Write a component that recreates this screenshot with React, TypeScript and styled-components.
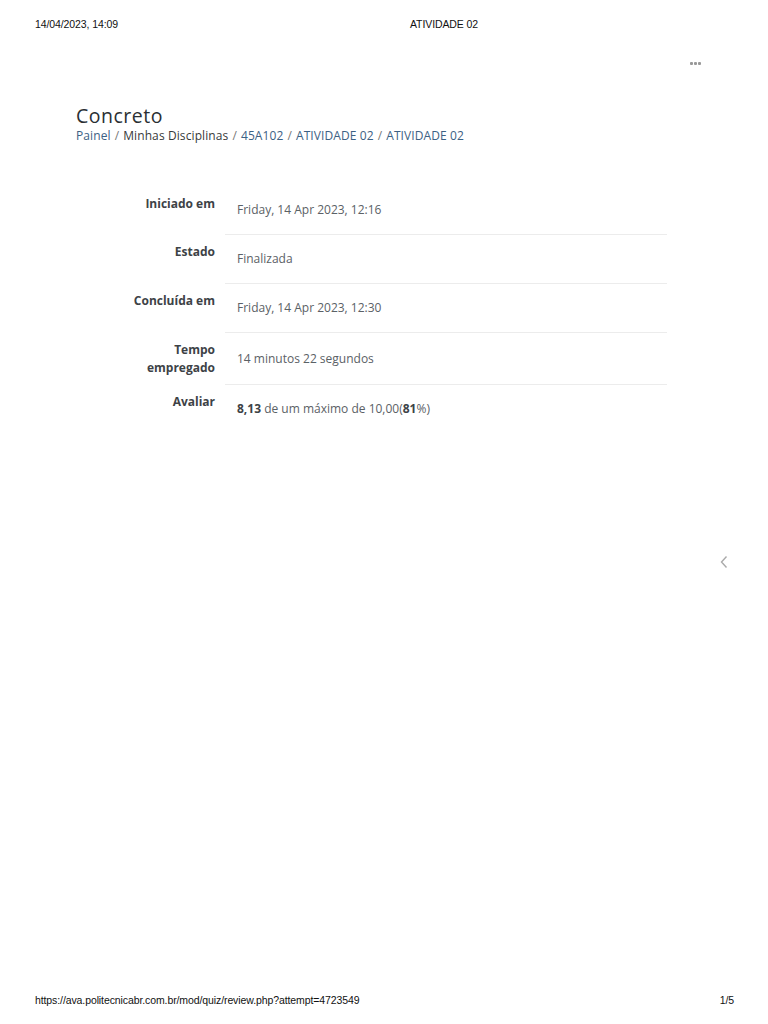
import React from 'react'
import styled, { createGlobalStyle } from 'styled-components'

const GlobalStyle = createGlobalStyle`
  html, body {
    margin: 0;
    padding: 0;
    background: #fff;
  }
  body {
    font-family: 'Open Sans', 'Noto Sans', sans-serif;
  }
`

const Sheet = styled.div`
  width: 768px;
  height: 1024px;
  display: flex;
  flex-direction: column;
  box-sizing: border-box;
  padding: 17px 34px 0 35px;
`

const PrintBar = styled.div`
  display: flex;
  align-items: center;
  height: 13px;
  font-family: 'Liberation Sans', Arial, sans-serif;
  font-size: 10.5px;
  color: #111;
  letter-spacing: -0.1px;
`

const PrintLeft = styled.span`
  width: 375px;
`

const PrintRight = styled.span`
  margin-left: auto;
`

const Main = styled.main`
  flex: 1;
  position: relative;
  padding: 0 0 0 41px;
`

const Dots = styled.div`
  position: absolute;
  top: 32px;
  right: 33px;
  display: flex;
  gap: 1px;
`

const Dot = styled.span`
  width: 3px;
  height: 3px;
  background: #999;
  border-radius: 1px;
`

const Chevron = styled.svg`
  position: absolute;
  top: 525px;
  right: 5px;
`

const Title = styled.h1`
  margin: 74px 0 0;
  font-size: 19.5px;
  font-weight: 400;
  line-height: 24px;
  letter-spacing: 0.5px;
  color: #2a2f33;
`

const Crumbs = styled.nav`
  display: flex;
  gap: 4px;
  font-size: 12px;
  line-height: 16px;
  letter-spacing: 0.1px;
  color: #373a3c;
`

const Crumb = styled.span<{ $link?: boolean }>`
  color: ${({ $link }) => ($link ? '#3c6184' : '#373a3c')};
`

const Sep = styled.span`
  color: #777;
`

const Summary = styled.div`
  margin-top: 42px;
  width: 591px;
  display: grid;
  grid-template-columns: 139px 1fr;
  column-gap: 10px;
`

const Label = styled.div`
  font-size: 12px;
  font-weight: 700;
  line-height: 18px;
  color: #3d4246;
  text-align: right;
  padding: 9px 0 7px;
`

const Value = styled.div<{ $first?: boolean }>`
  display: flex;
  align-items: center;
  font-size: 12px;
  line-height: 18px;
  color: #5b6166;
  padding: 15px 12px 15px;
  border-top: ${({ $first }) => ($first ? 'none' : '1px solid #ececec')};
`

const Strong = styled.b`
  font-weight: 700;
  color: #3d4246;
`

const Footer = styled.div`
  display: flex;
  align-items: center;
  height: 13px;
  font-family: 'Liberation Sans', Arial, sans-serif;
  font-size: 10.5px;
  color: #111;
  letter-spacing: -0.1px;
  margin-bottom: 18px;
`

const rows: { label: React.ReactNode; value: React.ReactNode }[] = [
  { label: 'Iniciado em', value: 'Friday, 14 Apr 2023, 12:16' },
  { label: 'Estado', value: 'Finalizada' },
  { label: 'Concluída em', value: 'Friday, 14 Apr 2023, 12:30' },
  { label: <>Tempo<br />empregado</>, value: '14 minutos 22 segundos' },
  {
    label: 'Avaliar',
    value: (
      <span>
        <Strong>8,13</Strong> de um máximo de 10,00(<Strong>81</Strong>%)
      </span>
    ),
  },
]

const App = () => {
  return (
    <>
      <GlobalStyle />
      <Sheet>
        <PrintBar>
          <PrintLeft>14/04/2023, 14:09</PrintLeft>
          <span>ATIVIDADE 02</span>
        </PrintBar>
        <Main>
          <Dots>
            <Dot />
            <Dot />
            <Dot />
          </Dots>
          <Chevron width="10" height="14" viewBox="0 0 10 14">
            <path d="M7.5 1.5 L2.5 7 L7.5 12.5" fill="none" stroke="#aaa" strokeWidth="1.4" />
          </Chevron>
          <Title>Concreto</Title>
          <Crumbs>
            <Crumb $link>Painel</Crumb>
            <Sep>/</Sep>
            <Crumb>Minhas Disciplinas</Crumb>
            <Sep>/</Sep>
            <Crumb $link>45A102</Crumb>
            <Sep>/</Sep>
            <Crumb $link>ATIVIDADE 02</Crumb>
            <Sep>/</Sep>
            <Crumb $link>ATIVIDADE 02</Crumb>
          </Crumbs>
          <Summary>
            {rows.map((r, i) => (
              <React.Fragment key={i}>
                <Label>{r.label}</Label>
                <Value $first={i === 0}>{r.value}</Value>
              </React.Fragment>
            ))}
          </Summary>
        </Main>
        <Footer>
          <span>https://ava.politecnicabr.com.br/mod/quiz/review.php?attempt=4723549</span>
          <PrintRight>1/5</PrintRight>
        </Footer>
      </Sheet>
    </>
  )
}

export default App
